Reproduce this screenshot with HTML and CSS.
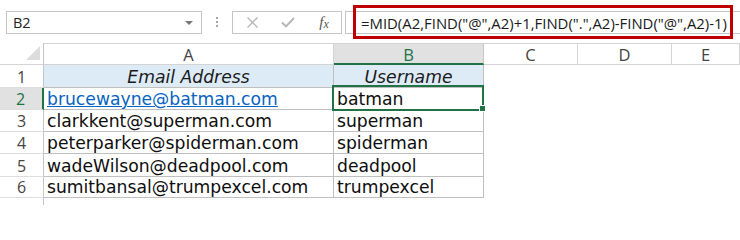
FILE: index.html
```html
<!DOCTYPE html>
<html>
<head>
<meta charset="utf-8">
<link rel="stylesheet" href="styles.css">
</head>
<body>
<div class="toolbar">
  <div class="namebox"><span class="ref">B2</span><span class="caret"></span></div>
  <div class="grip"><i></i><i></i><i></i></div>
  <div class="fbtns">
    <span class="btn"><svg width="11" height="11" viewBox="0 0 11 11"><path d="M0.5 0.5 L10.5 10.5 M10.5 0.5 L0.5 10.5" stroke="#b5b5b5" stroke-width="1.3" fill="none"/></svg></span>
    <span class="btn"><svg width="14" height="11" viewBox="0 0 14 11"><path d="M1 5.5 L5 9.5 L13 1" stroke="#b5b5b5" stroke-width="1.9" fill="none"/></svg></span>
    <span class="btn fx">f<span class="fxx">x</span></span>
  </div>
  <div class="fbar"><span class="formula">=MID(A2,FIND("@",A2)+1,FIND(".",A2)-FIND("@",A2)-1)</span></div>
  <div class="highlight"></div>
</div>
<div class="sheet">
  <div class="corner"><span class="tri"></span></div>
  <div class="colhdr">A</div>
  <div class="colhdr sel">B</div>
  <div class="colhdr">C</div>
  <div class="colhdr">D</div>
  <div class="colhdr">E</div>

  <div class="rowhdr">1</div>
  <div class="cell head">Email Address</div>
  <div class="cell head">Username</div>
  <div></div><div></div><div></div>

  <div class="rowhdr sel">2</div>
  <div class="cell"><span class="link">brucewayne@batman.com</span></div>
  <div class="cell active">batman</div>
  <div></div><div></div><div></div>

  <div class="rowhdr">3</div>
  <div class="cell">clarkkent@superman.com</div>
  <div class="cell">superman</div>
  <div></div><div></div><div></div>

  <div class="rowhdr">4</div>
  <div class="cell">peterparker@spiderman.com</div>
  <div class="cell">spiderman</div>
  <div></div><div></div><div></div>

  <div class="rowhdr">5</div>
  <div class="cell">wadeWilson@deadpool.com</div>
  <div class="cell">deadpool</div>
  <div></div><div></div><div></div>

  <div class="rowhdr">6</div>
  <div class="cell">sumitbansal@trumpexcel.com</div>
  <div class="cell">trumpexcel</div>
  <div></div><div></div><div></div>

  <div class="rowhdr"></div>
  <div></div><div></div><div></div><div></div><div></div>
</div>
</body>
</html>
```
FILE: styles.css
```css
html, body {
  margin: 0;
  padding: 0;
  background: #ffffff;
  width: 740px;
  height: 205px;
  overflow: hidden;
}

.toolbar {
  position: relative;
  display: flex;
  align-items: flex-start;
  box-sizing: border-box;
  height: 43px;
  padding: 11px 0 0 6px;
  font-family: "Open Sans", "Noto Sans", sans-serif;
}

.namebox {
  box-sizing: border-box;
  width: 196px;
  height: 23px;
  border: 1px solid #c6c6c6;
  display: flex;
  align-items: center;
  justify-content: space-between;
  padding: 0 8px 0 6px;
  font-size: 14.5px;
  color: #222;
}

.caret {
  width: 0;
  height: 0;
  border-left: 4px solid transparent;
  border-right: 4px solid transparent;
  border-top: 4px solid #777;
}

.grip {
  display: flex;
  flex-direction: column;
  gap: 2px;
  width: 2px;
  margin: 6px 14px 0 14px;
}
.grip i {
  display: block;
  width: 2px;
  height: 2px;
  background: #a6a6a6;
}

.fbtns {
  box-sizing: border-box;
  width: 110px;
  height: 23px;
  border: 1px solid #c6c6c6;
  display: grid;
  grid-template-columns: 36px 36px 36px;
  padding-left: 1px;
  align-items: center;
  justify-items: center;
}
.btn {
  display: flex;
  align-items: center;
  justify-content: center;
  height: 21px;
}
.fx {
  font-family: "Liberation Serif", serif;
  font-style: italic;
  font-size: 15px;
  color: #555;
  line-height: 1;
}
.fxx {
  font-size: 12px;
  position: relative;
  top: 1px;
}

.fbar {
  box-sizing: border-box;
  flex: 1;
  margin-left: 3px;
  height: 23px;
  border: 1px solid #c6c6c6;
  border-right: none;
  padding-left: 15px;
  display: flex;
  align-items: center;
  font-size: 14.9px;
  color: #1a1a1a;
  white-space: nowrap;
}

.highlight {
  position: absolute;
  left: 353px;
  top: 5px;
  width: 380px;
  height: 34px;
  box-sizing: border-box;
  border: 3px solid #c00000;
}

.sheet {
  display: grid;
  grid-template-columns: 44px 290px 150px 94px 94px 1fr;
  grid-template-rows: 22px 23px 22px 22px 22px 23px 21px 22px;
}
.sheet > div {
  box-sizing: border-box;
  white-space: nowrap;
}

.corner {
  border-right: 1px solid #c6c6c6;
  border-bottom: 1px solid #d4d4d4;
  display: flex;
  justify-content: flex-end;
  align-items: flex-end;
  padding: 0 3px 4px 0;
}
.tri {
  width: 0;
  height: 0;
  border-left: 14px solid transparent;
  border-bottom: 14px solid #dcdcdc;
}

.colhdr {
  border-top: 1px solid #d4d4d4;
  border-bottom: 1px solid #d4d4d4;
  border-right: 1px solid #d4d4d4;
  font-family: "Open Sans", "Noto Sans", sans-serif;
  font-size: 16.5px;
  line-height: 20px;
  padding-top: 1px;
  text-align: center;
  color: #444;
}
.colhdr.sel {
  background: #e1e1e1;
  color: #217346;
  border-bottom: 2px solid #217346;
  border-right-color: #c6c6c6;
}

.rowhdr {
  border-right: 1px solid #c6c6c6;
  border-bottom: 1px solid #dedede;
  font-family: "Open Sans", "Noto Sans", sans-serif;
  font-size: 16px;
  line-height: 20px;
  display: flex;
  align-items: flex-end;
  justify-content: center;
  color: #444;
}
.rowhdr.sel {
  background: #e1e1e1;
  color: #217346;
  border-right: 2px solid #217346;
  padding-right: 1px;
}

.cell {
  border-right: 1px solid #bfbfbf;
  border-bottom: 1px solid #bfbfbf;
  font-family: "DejaVu Sans", Verdana, sans-serif;
  font-size: 17.2px;
  line-height: 20px;
  display: flex;
  align-items: flex-end;
  padding-left: 3px;
  color: #0d0d0d;
}
.cell.head {
  background: #ddebf7;
  font-style: italic;
  justify-content: center;
  padding-left: 0;
  color: #1a1a1a;
}
.link {
  color: #0563c1;
  text-decoration: underline;
}

.cell.active {
  position: relative;
}
.cell.active::after {
  content: "";
  position: absolute;
  left: -2px;
  top: -3px;
  width: 152px;
  height: 26px;
  box-sizing: border-box;
  border: 2px solid #217346;
}
.cell.active::before {
  content: "";
  position: absolute;
  left: 145px;
  top: 17px;
  width: 5px;
  height: 5px;
  background: #217346;
  border: 1px solid #ffffff;
  z-index: 2;
}
```
